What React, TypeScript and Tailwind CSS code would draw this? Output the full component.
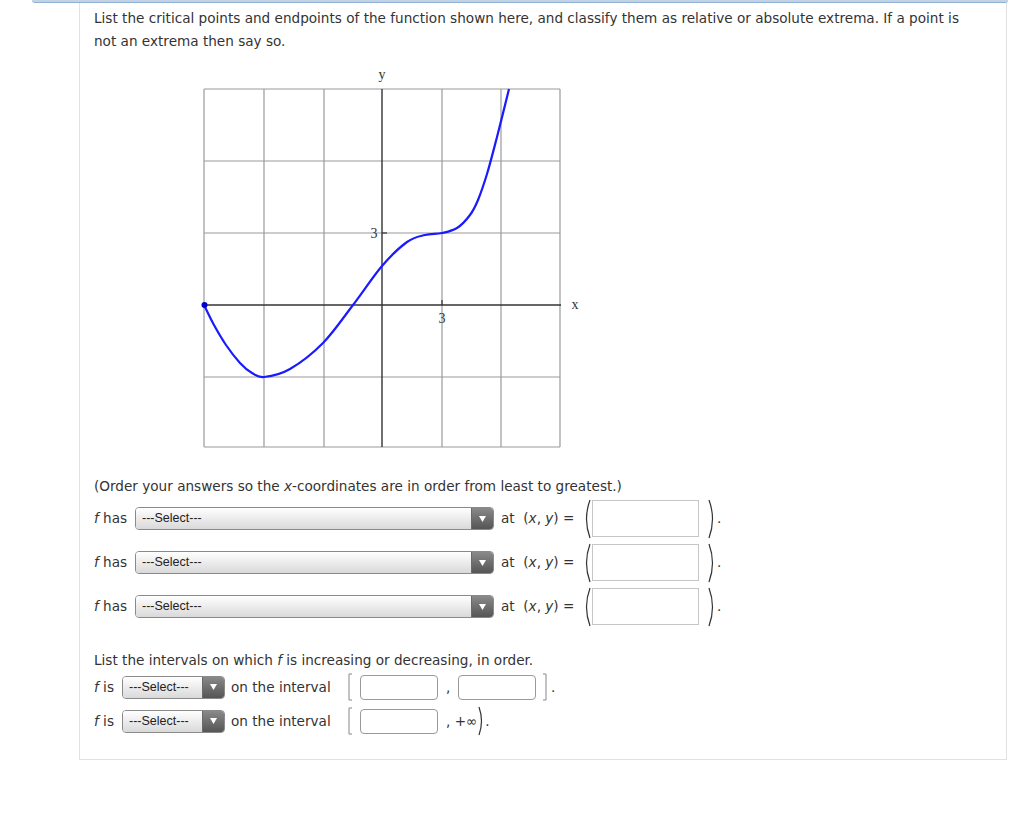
import React from "react";

const pts: [number, number][] = [
	[204, 305], [214, 325], [226, 345], [240, 363], [252, 373], [264, 377],
	[290, 369], [323, 343], [353, 305], [382, 266], [407, 242], [425, 235],
	[442, 233], [457, 228], [470, 215], [478, 200], [487, 174], [497, 137], [509, 89],
];

// catmull-rom through the sampled points
const curvePath = () => {
	let d = `M${pts[0][0]},${pts[0][1]}`;
	for (let i = 0; i < pts.length - 1; i++) {
		const p0 = pts[i - 1] ?? pts[i];
		const p1 = pts[i];
		const p2 = pts[i + 1];
		const p3 = pts[i + 2] ?? p2;
		const c1x = p1[0] + (p2[0] - p0[0]) / 6;
		const c1y = p1[1] + (p2[1] - p0[1]) / 6;
		const c2x = p2[0] - (p3[0] - p1[0]) / 6;
		const c2y = p2[1] - (p3[1] - p1[1]) / 6;
		d += ` C${c1x.toFixed(1)},${c1y.toFixed(1)} ${c2x.toFixed(1)},${c2y.toFixed(1)} ${p2[0]},${p2[1]}`;
	}
	return d;
};

const Graph = () => {
	const vLines = [204, 264, 324, 442, 501, 560];
	const hLines = [89, 161, 233, 377, 447];
	return (
		<svg viewBox="190 60 400 400" width={400} height={400} className="block ml-[96px] mt-[7px]">
			{vLines.map((x) => (
				<line key={x} x1={x} y1={89} x2={x} y2={447} stroke="#9a9a9a" strokeWidth={1.2} />
			))}
			{hLines.map((y) => (
				<line key={y} x1={204} y1={y} x2={560} y2={y} stroke="#9a9a9a" strokeWidth={1.2} />
			))}
			<line x1={204} y1={305} x2={561} y2={305} stroke="#333" strokeWidth={1.4} />
			<line x1={382} y1={89} x2={382} y2={447} stroke="#333" strokeWidth={1.4} />
			<line x1={382} y1={233} x2={387} y2={233} stroke="#333" strokeWidth={1.2} />
			<line x1={442} y1={300} x2={442} y2={305} stroke="#333" strokeWidth={1.2} />
			<g fontFamily="'Liberation Serif', serif" fontSize={14} fill="#333">
				<text x={382} y={79} textAnchor="middle">y</text>
				<text x={575} y={309} textAnchor="middle">x</text>
				<text x={374} y={238} textAnchor="middle">3</text>
				<text x={442} y={323} textAnchor="middle">3</text>
			</g>
			<path d={curvePath()} fill="none" stroke="#1a1aff" strokeWidth={2.2} />
			<circle cx={204.5} cy={305} r={3} fill="#0000cc" />
		</svg>
	);
};

const Select = ({ wide }: { wide?: boolean }) => (
	<div
		className={`flex h-[23px] rounded-[4px] border border-[#8a8a8a] overflow-hidden ${wide ? "w-[359px]" : "w-[103px]"}`}
	>
		<div className="flex-1 flex items-center pl-[6px] bg-gradient-to-b from-white to-[#d9d9d9] text-[12.5px] text-[#222] [font-family:'Liberation_Sans',Arial,sans-serif]">
			---Select---
		</div>
		<div className="w-[22px] flex items-center justify-center bg-gradient-to-b from-[#8a8a8a] to-[#555] border-l border-[#6a6a6a]">
			<svg width="7" height="6" viewBox="0 0 7 6">
				<path d="M0,0 L7,0 L3.5,6 Z" fill="#fff" />
			</svg>
		</div>
	</div>
);

const Paren = ({ right }: { right?: boolean }) => (
	<svg width="8" height="40" viewBox="0 0 8 40" className="block">
		<path
			d={right ? "M1,1 Q8,20 1,39" : "M7,1 Q0,20 7,39"}
			fill="none"
			stroke="#333"
			strokeWidth={1.2}
		/>
	</svg>
);

const Bracket = ({ right }: { right?: boolean }) => (
	<svg width="6" height="28" viewBox="0 0 6 28" className="block">
		<path
			d={right ? "M1,1 L4,1 L4,27 L1,27" : "M5,1 L2,1 L2,27 L5,27"}
			fill="none"
			stroke="#888"
			strokeWidth={1}
		/>
	</svg>
);

const PointRow = () => (
	<div className="flex items-center h-[37px]">
		<span className="w-[41px]">
			<i>f</i> has
		</span>
		<Select wide />
		<span className="ml-[7px] w-[82px] whitespace-pre">
			at  (<i>x</i>, <i>y</i>) =
		</span>
		<Paren />
		<div className="ml-[1px] w-[107px] h-[37px] border border-[#c6c6c6] bg-white" />
		<span className="ml-[9px]">
			<Paren right />
		</span>
		<span className="ml-[1px]">.</span>
	</div>
);

const SmallBox = () => (
	<div className="w-[78px] h-[25px] border border-[#9a9a9a] rounded-[4px] bg-white" />
);

const App = () => {
	return (
		<div className="w-[1024px] h-[823px] bg-white text-[#333] text-[13.6px] leading-[23px] [font-family:'DejaVu_Sans',Verdana,sans-serif]">
			<div className="ml-[32px] w-[976px] h-[3px] bg-[#c3d3e6] border-b border-[#8fb0d3] rounded-bl-[4px] rounded-br-[4px]" />
			<div className="ml-[79px] w-[928px] h-[757px] border border-t-0 border-[#e2e2e2] pl-[14px] pt-[4px]">
				<p className="pr-[30px]">
					List the critical points and endpoints of the function shown here, and classify them as relative or absolute extrema. If a point is not an extrema then say so.
				</p>
				<Graph />
				<p className="mt-[15px]">
					(Order your answers so the <i>x</i>-coordinates are in order from least to greatest.)
				</p>
				<div className="flex flex-col gap-[7px] mt-[2px]">
					<PointRow />
					<PointRow />
					<PointRow />
				</div>
				<p className="mt-[24px]">
					List the intervals on which <i>f</i> is increasing or decreasing, in order.
				</p>
				<div className="flex flex-col gap-[8px] mt-[2px]">
					<div className="flex items-center h-[26px]">
						<span className="w-[28px]">
							<i>f</i> is
						</span>
						<Select />
						<span className="ml-[6px] w-[116px]">on the interval</span>
						<Bracket />
						<span className="ml-[7px]">
							<SmallBox />
						</span>
						<span className="ml-[8px] w-[12px]">,</span>
						<SmallBox />
						<span className="ml-[6px]">
							<Bracket right />
						</span>
						<span className="ml-[3px]">.</span>
					</div>
					<div className="flex items-center h-[26px]">
						<span className="w-[28px]">
							<i>f</i> is
						</span>
						<Select />
						<span className="ml-[6px] w-[116px]">on the interval</span>
						<Bracket />
						<span className="ml-[7px]">
							<SmallBox />
						</span>
						<span className="ml-[8px]">, +∞</span>
						<svg width="6" height="30" viewBox="0 0 6 30" className="block ml-[1px]">
							<path d="M1,1 Q6,15 1,29" fill="none" stroke="#333" strokeWidth={1.2} />
						</svg>
						<span className="ml-[1px]">.</span>
					</div>
				</div>
			</div>
		</div>
	);
};

export default App;
